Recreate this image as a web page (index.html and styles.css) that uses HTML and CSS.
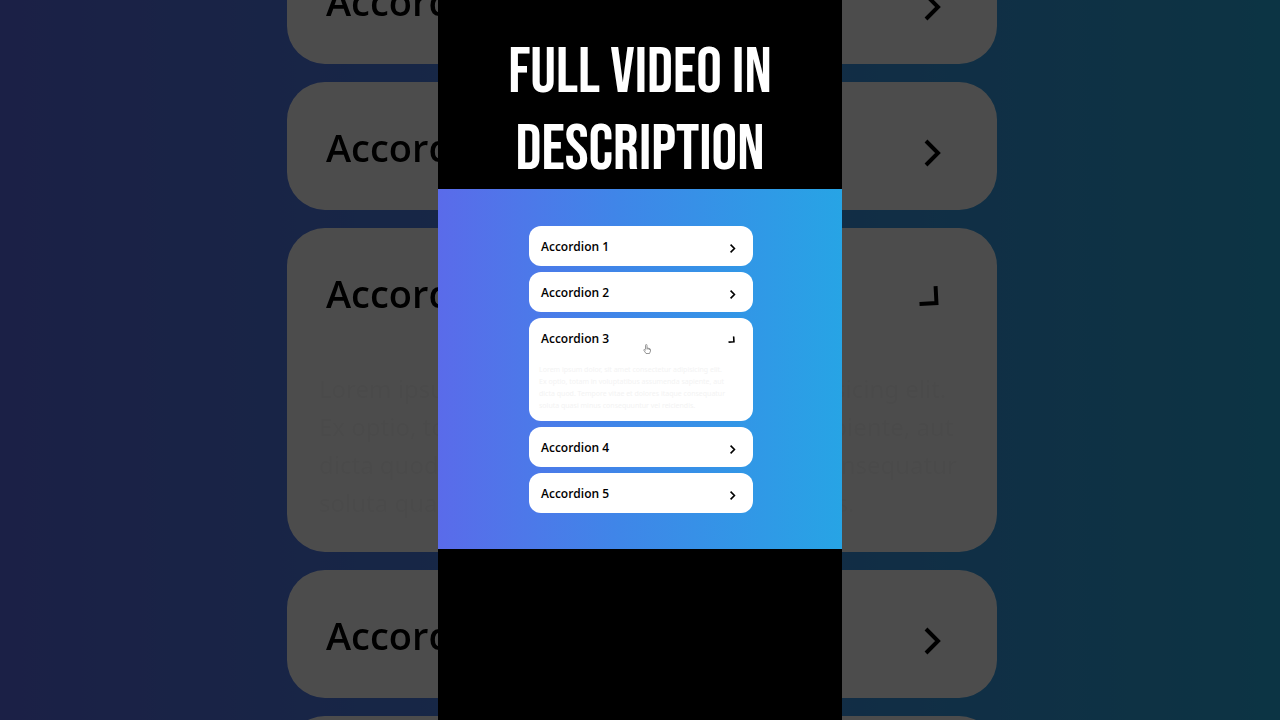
FILE: index.html
```
<!DOCTYPE html>
<html lang="en">
<head>
	<meta charset="UTF-8">
	<title>Accordion</title>
	<link rel="stylesheet" href="styles.css">
</head>
<body>

	<!-- enlarged, darkened copy behind the video -->
	<div class="backdrop" inert>
		<div class="accordion large">
			<div class="item">
				<button class="header">Accordion 1 <svg class="arrow" viewBox="-14 -14 28 28"><path d="M-6 -12L6 0L-6 12"/></svg></button>
			</div>
			<div class="item">
				<button class="header">Accordion 2 <svg class="arrow" viewBox="-14 -14 28 28"><path d="M-6 -12L6 0L-6 12"/></svg></button>
			</div>
			<div class="item open">
				<button class="header">Accordion 3 <svg class="arrow" viewBox="-14 -14 28 28"><path d="M-6 -12L6 0L-6 12"/></svg></button>
				<p class="content">Lorem ipsum dolor, sit amet consectetur adipisicing elit.<br>Ex optio, totam in voluptatibus assumenda sapiente, aut<br>dicta quod. Tempore vitae et dolores itaque consequatur<br>soluta quasi minus consequuntur vel reiciendis.</p>
			</div>
			<div class="item">
				<button class="header">Accordion 4 <svg class="arrow" viewBox="-14 -14 28 28"><path d="M-6 -12L6 0L-6 12"/></svg></button>
			</div>
			<div class="item">
				<button class="header">Accordion 5 <svg class="arrow" viewBox="-14 -14 28 28"><path d="M-6 -12L6 0L-6 12"/></svg></button>
			</div>
		</div>
	</div>

	<main class="short">
		<h1>FULL VIDEO IN<br>DESCRIPTION</h1>
		<div class="video">
			<div class="accordion">
				<div class="item">
					<button class="header" aria-expanded="false">Accordion 1 <svg class="arrow" viewBox="-14 -14 28 28"><path d="M-6 -12L6 0L-6 12"/></svg></button>
				</div>
				<div class="item">
					<button class="header" aria-expanded="false">Accordion 2 <svg class="arrow" viewBox="-14 -14 28 28"><path d="M-6 -12L6 0L-6 12"/></svg></button>
				</div>
				<div class="item open">
					<button class="header" aria-expanded="true">Accordion 3 <svg class="arrow" viewBox="-14 -14 28 28"><path d="M-6 -12L6 0L-6 12"/></svg></button>
					<p class="content">Lorem ipsum dolor, sit amet consectetur adipisicing elit.<br>Ex optio, totam in voluptatibus assumenda sapiente, aut<br>dicta quod. Tempore vitae et dolores itaque consequatur<br>soluta quasi minus consequuntur vel reiciendis.</p>
					<svg class="cursor" viewBox="0 0 16 20"><path d="M5 11V3q0-2 1.500-2T8 3v5l5 1q2 .5 2 2.500V14l-2 5H6l-4-6q-1-2 .5-2T5 13M8 8v3M10.500 9v2M13 9.500V12"/></svg>
				</div>
				<div class="item">
					<button class="header" aria-expanded="false">Accordion 4 <svg class="arrow" viewBox="-14 -14 28 28"><path d="M-6 -12L6 0L-6 12"/></svg></button>
				</div>
				<div class="item">
					<button class="header" aria-expanded="false">Accordion 5 <svg class="arrow" viewBox="-14 -14 28 28"><path d="M-6 -12L6 0L-6 12"/></svg></button>
				</div>
			</div>
		</div>
	</main>

</body>
</html>
```
FILE: styles.css
```
* {
	box-sizing: border-box;
}

body {
	margin: 0;
	display: grid;
	height: 100vh;
	overflow: hidden;
	background: #000;
	font-family: "Segoe UI", "Open Sans", "Noto Sans", sans-serif;
}

.backdrop, .short {
	grid-area: 1 / 1;
	height: 100vh;
	overflow: hidden;
}

.backdrop {
	padding-left: 4px;
	background: linear-gradient(to right, #5a6bea, #4688e8 45%, #28ade3);
	filter: brightness(0.3);
}

.short {
	position: relative;
	justify-self: center;
	width: 100%;
	max-width: 404px;
	background: #000;
}

h1 {
	margin: 0;
	padding: 34px 0 1px;
	color: #fff;
	font-family: "Bebas Neue", "Roboto Condensed", "Liberation Sans Narrow", "Liberation Sans", sans-serif;
	font-size: 64px;
	line-height: 77px;
	font-weight: normal;
	text-align: center;
}

.video {
	display: grid;
	place-items: center;
	min-height: 360px;
	padding-left: 2px;
	background: linear-gradient(to right, #5a6bea, #3f86e8 45%, #27a4e5);
}

.accordion {
	display: flex;
	flex-direction: column;
	gap: 6px;
	width: 100%;
	max-width: 224px;
}

.item {
	position: relative;
	background: #fff;
	border-radius: 12px;
}

.header {
	display: flex;
	align-items: center;
	justify-content: space-between;
	width: 100%;
	height: 40px;
	padding: 2px 16px 0 12px;
	border: 0;
	background: none;
	color: #000;
	font-family: inherit;
	font-size: 12px;
	font-weight: 600;
	cursor: pointer;
}

.arrow {
	width: 9px;
	height: 9px;
	margin-top: 3px;
	fill: none;
	stroke: #000;
	stroke-width: 5;
}

.open .arrow {
	transform: rotate(42deg);
}

.content {
	margin: 0;
	padding: 6px 10px 9px;
	color: #f3f3f3;
	font-family: "Noto Sans", sans-serif;
	font-size: 7px;
	line-height: 12px;
	white-space: nowrap;
}

.cursor {
	position: absolute;
	top: 26px;
	left: 114px;
	width: 8px;
	height: 10px;
	fill: #fff;
	stroke: #777;
	stroke-width: 1.5;
}

.large {
	gap: 18px;
	max-width: 710px;
	margin: -64px auto 0;
}

.large .item {
	border-radius: 38px;
}

.large .header {
	height: 128px;
	padding: 2px 51px 0 39px;
	font-size: 38px;
}

.large .arrow {
	width: 28px;
	height: 28px;
	margin-top: 11px;
	stroke-width: 4;
}

.large .content {
	padding: 14px 32px 30px;
	color: #f7f7f7;
	font-size: 24px;
	line-height: 38px;
}
```
